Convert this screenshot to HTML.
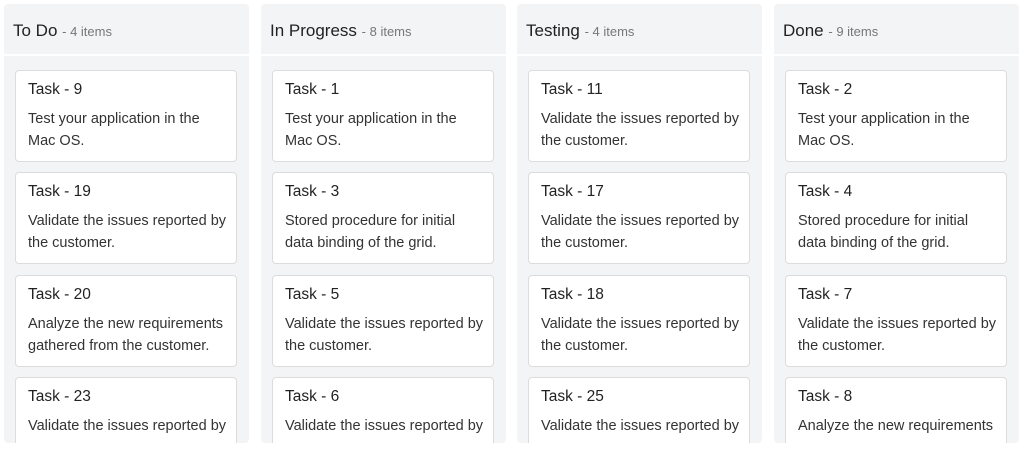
<!DOCTYPE html><html><head><style>
body{margin:0;width:1024px;height:454px;background:#fff;font-family:"Liberation Sans",sans-serif;overflow:hidden;position:relative}
.col{position:absolute;top:4px;width:245px;height:439px;background:#f3f4f6;border-radius:4px;overflow:hidden}
.hd{height:52px;border-bottom:2px solid #fff;box-sizing:border-box;padding:17px 0 0 9px;font-size:17px;color:#222}
.hd span{font-size:13px;color:#777}
.card{position:absolute;left:11px;width:222px;height:92px;background:#fff;border:1px solid #dcdcdc;border-radius:4px;box-sizing:border-box;padding:10px 6px 0 12px;color:#333;overflow:hidden}
.card.last .d{height:22px;overflow:hidden}
.t{font-size:15.5px;color:#222;margin-bottom:9px}
.d{font-size:14.5px;line-height:22px}
</style></head><body>
<div class="col" style="left:4px"><div class="hd">To Do <span>- 4 items</span></div>
<div class="card" style="top:66px"><div class="t">Task - 9</div><div class="d">Test your application in the Mac OS.</div></div>
<div class="card" style="top:168px"><div class="t">Task - 19</div><div class="d">Validate the issues reported by the customer.</div></div>
<div class="card" style="top:271px"><div class="t">Task - 20</div><div class="d">Analyze the new requirements gathered from the customer.</div></div>
<div class="card last" style="top:373px"><div class="t">Task - 23</div><div class="d">Validate the issues reported by the customer.</div></div></div>
<div class="col" style="left:261px"><div class="hd">In Progress <span>- 8 items</span></div>
<div class="card" style="top:66px"><div class="t">Task - 1</div><div class="d">Test your application in the Mac OS.</div></div>
<div class="card" style="top:168px"><div class="t">Task - 3</div><div class="d">Stored procedure for initial data binding of the grid.</div></div>
<div class="card" style="top:271px"><div class="t">Task - 5</div><div class="d">Validate the issues reported by the customer.</div></div>
<div class="card last" style="top:373px"><div class="t">Task - 6</div><div class="d">Validate the issues reported by the customer.</div></div></div>
<div class="col" style="left:517px"><div class="hd">Testing <span>- 4 items</span></div>
<div class="card" style="top:66px"><div class="t">Task - 11</div><div class="d">Validate the issues reported by the customer.</div></div>
<div class="card" style="top:168px"><div class="t">Task - 17</div><div class="d">Validate the issues reported by the customer.</div></div>
<div class="card" style="top:271px"><div class="t">Task - 18</div><div class="d">Validate the issues reported by the customer.</div></div>
<div class="card last" style="top:373px"><div class="t">Task - 25</div><div class="d">Validate the issues reported by the customer.</div></div></div>
<div class="col" style="left:774px"><div class="hd">Done <span>- 9 items</span></div>
<div class="card" style="top:66px"><div class="t">Task - 2</div><div class="d">Test your application in the Mac OS.</div></div>
<div class="card" style="top:168px"><div class="t">Task - 4</div><div class="d">Stored procedure for initial data binding of the grid.</div></div>
<div class="card" style="top:271px"><div class="t">Task - 7</div><div class="d">Validate the issues reported by the customer.</div></div>
<div class="card last" style="top:373px"><div class="t">Task - 8</div><div class="d">Analyze the new requirements gathered from the customer.</div></div></div>
</body></html>
